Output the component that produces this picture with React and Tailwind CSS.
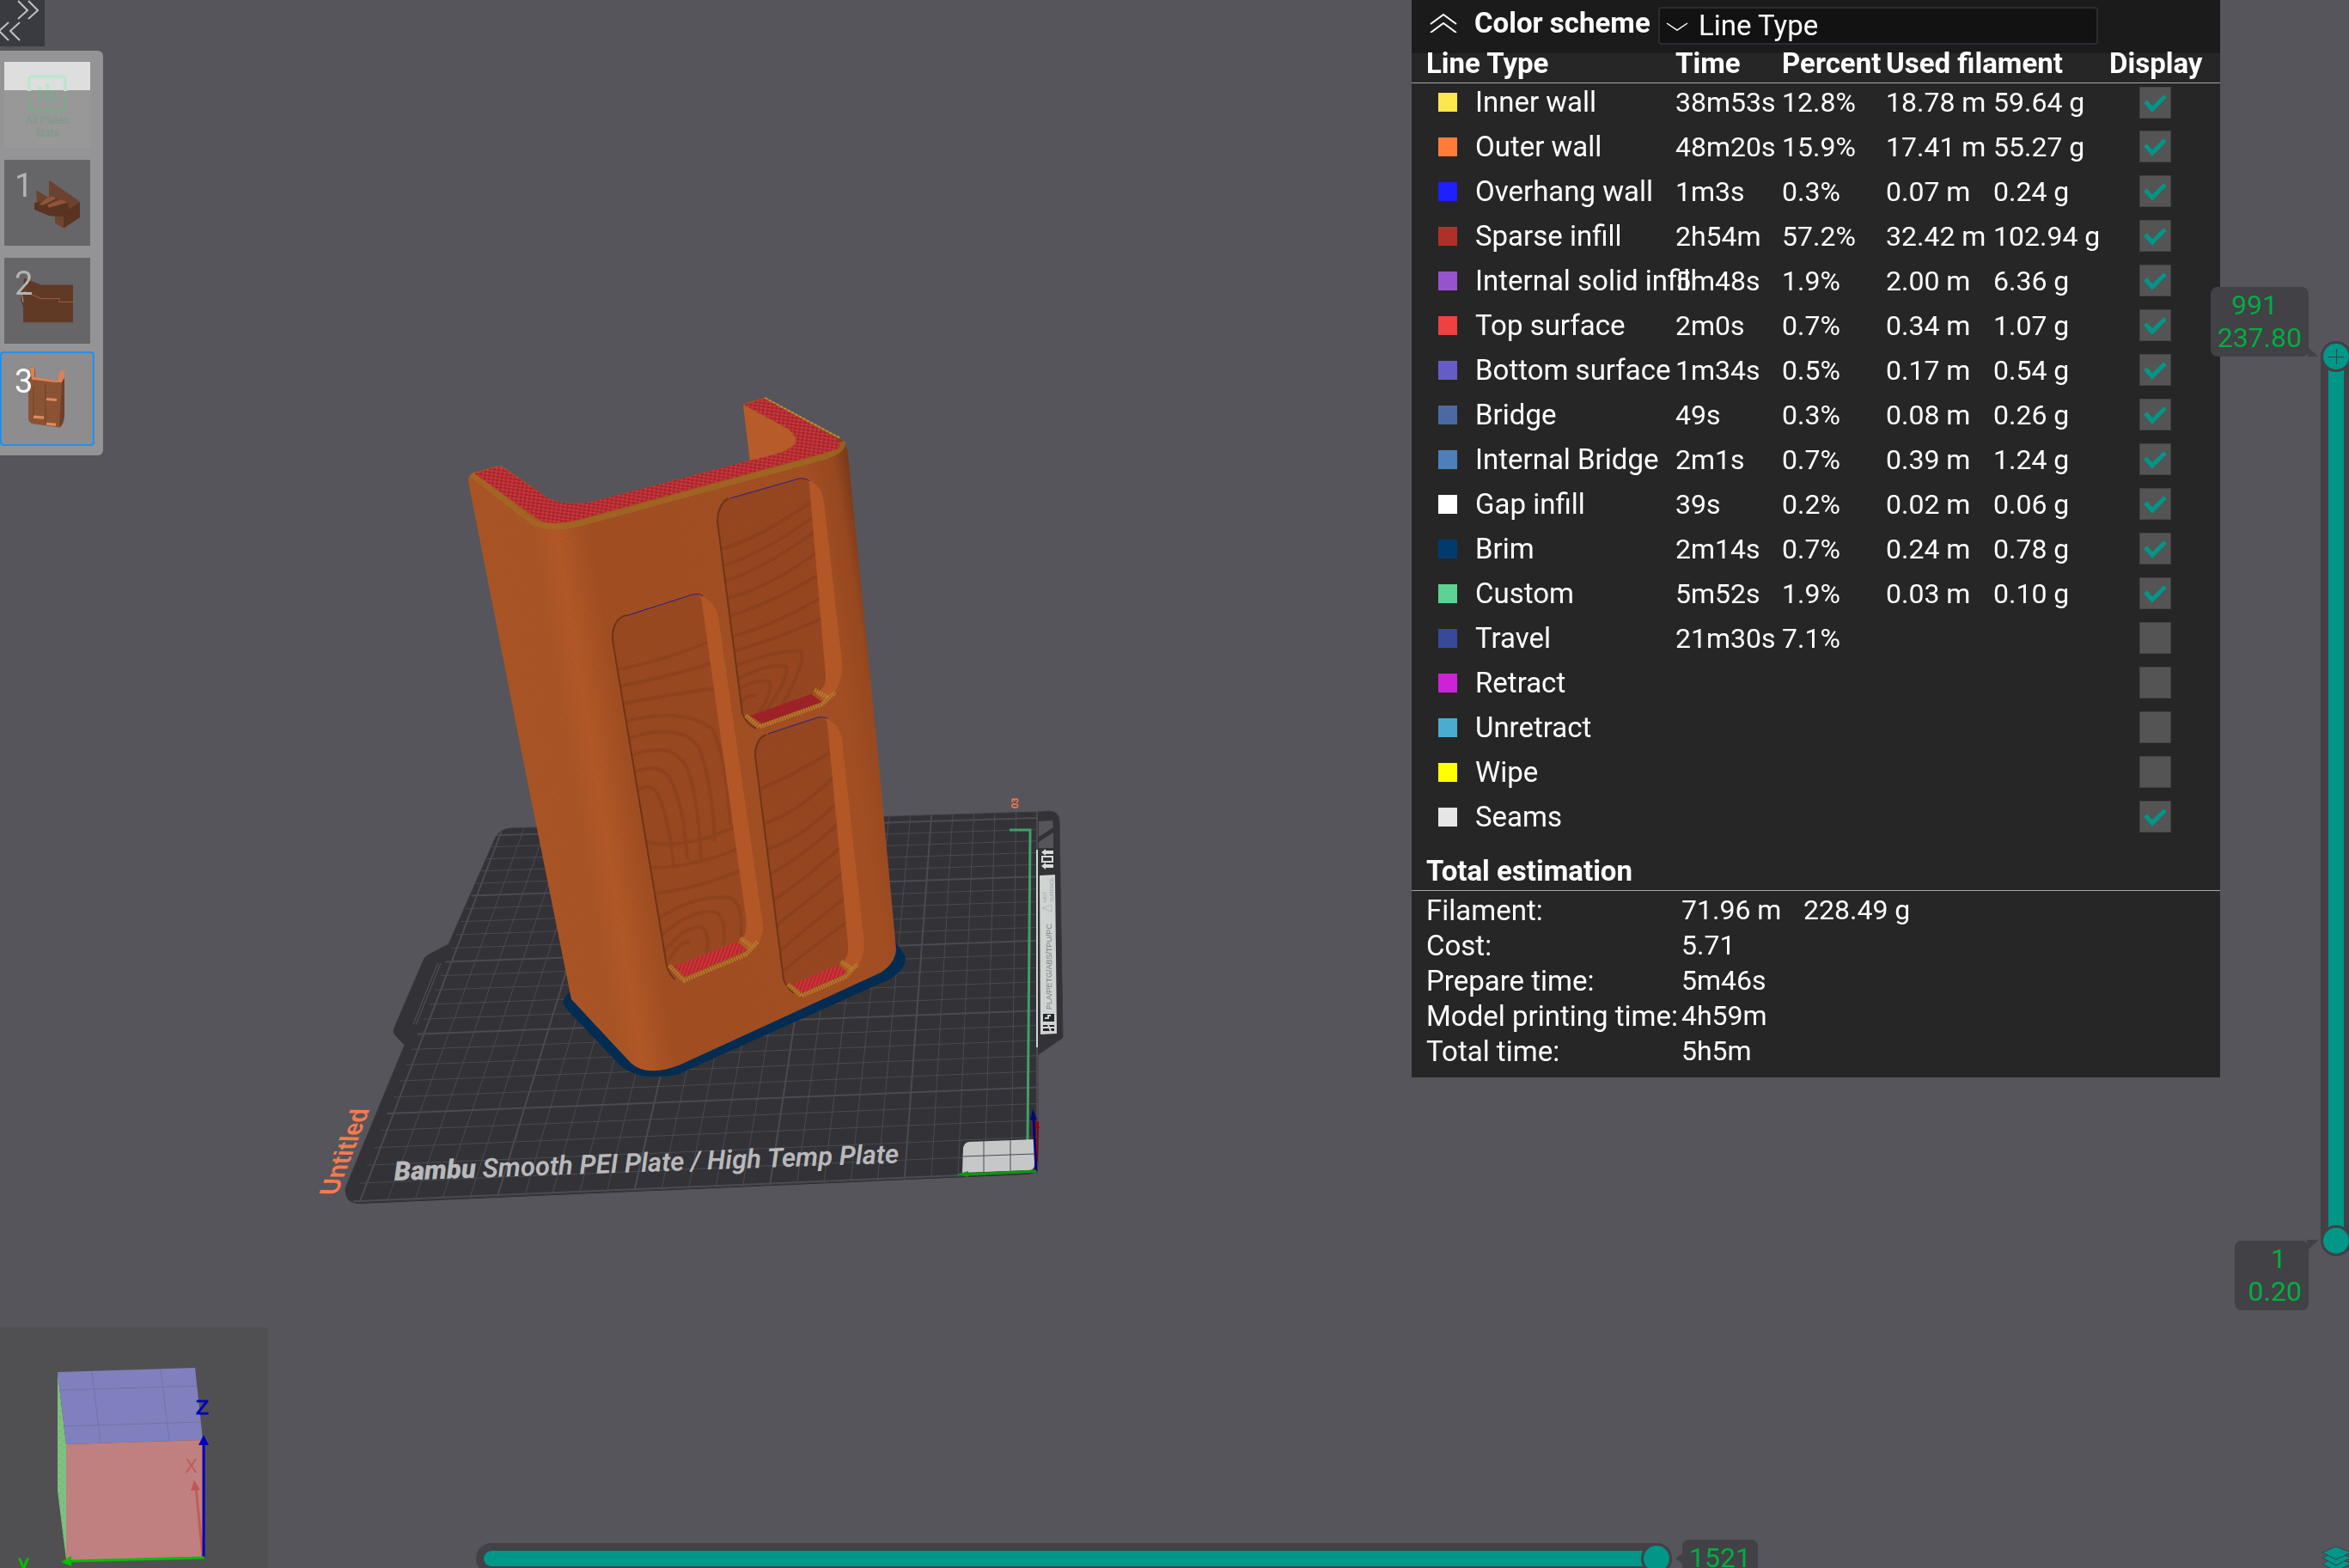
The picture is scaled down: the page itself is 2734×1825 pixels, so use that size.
import React, { useState } from "react";

const LINE_TYPES = [
  ["Inner wall", "#ffe64d", "38m53s", "12.8%", "18.78 m", "59.64 g", true],
  ["Outer wall", "#ff7d38", "48m20s", "15.9%", "17.41 m", "55.27 g", true],
  ["Overhang wall", "#1f1fff", "1m3s", "0.3%", "0.07 m", "0.24 g", true],
  ["Sparse infill", "#b03029", "2h54m", "57.2%", "32.42 m", "102.94 g", true],
  ["Internal solid infill", "#9654cc", "5m48s", "1.9%", "2.00 m", "6.36 g", true],
  ["Top surface", "#f04040", "2m0s", "0.7%", "0.34 m", "1.07 g", true],
  ["Bottom surface", "#665cc7", "1m34s", "0.5%", "0.17 m", "0.54 g", true],
  ["Bridge", "#4d69a3", "49s", "0.3%", "0.08 m", "0.26 g", true],
  ["Internal Bridge", "#4d80ba", "2m1s", "0.7%", "0.39 m", "1.24 g", true],
  ["Gap infill", "#ffffff", "39s", "0.2%", "0.02 m", "0.06 g", true],
  ["Brim", "#003b6e", "2m14s", "0.7%", "0.24 m", "0.78 g", true],
  ["Custom", "#5ed194", "5m52s", "1.9%", "0.03 m", "0.10 g", true],
  ["Travel", "#38489b", "21m30s", "7.1%", "", "", false],
  ["Retract", "#cd22d6", "", "", "", "", false],
  ["Unretract", "#49adcf", "", "", "", "", false],
  ["Wipe", "#ffff00", "", "", "", "", false],
  ["Seams", "#e6e6e6", "", "", "", "", true],
];

const TOTALS = [
  ["Filament:", "71.96 m", "228.49 g"],
  ["Cost:", "5.71", ""],
  ["Prepare time:", "5m46s", ""],
  ["Model printing time:", "4h59m", ""],
  ["Total time:", "5h5m", ""],
];

/* Projects plate coordinates (0..1, 0..1) onto the perspective quad. */
const QUAD = [[419, 1398], [1208, 1364], [1207, 952], [582, 972]];
function project(u, v) {
  const [[x0, y0], [x1, y1], [x2, y2], [x3, y3]] = QUAD;
  const dx1 = x1 - x2, dx2 = x3 - x2, sx = x0 - x1 + x2 - x3;
  const dy1 = y1 - y2, dy2 = y3 - y2, sy = y0 - y1 + y2 - y3;
  const den = dx1 * dy2 - dx2 * dy1;
  const g = (sx * dy2 - dx2 * sy) / den;
  const h = (dx1 * sy - sx * dy1) / den;
  const w = g * u + h * v + 1;
  return [
    ((x1 - x0 + g * x1) * u + (x3 - x0 + h * x3) * v + x0) / w,
    ((y1 - y0 + g * y1) * u + (y3 - y0 + h * y3) * v + y0) / w,
  ];
}
function gridPath(major) {
  let d = "";
  for (let i = 0; i <= 25; i++) {
    if ((i % 5 === 0) !== major) continue;
    const t = i / 25;
    const seg = (a, b) => {
      d += `M${a[0].toFixed(1)} ${a[1].toFixed(1)}L${b[0].toFixed(1)} ${b[1].toFixed(1)}`;
    };
    seg(project(t, -0.015), project(t, 1.04));
    seg(project(-0.01, t), project(1, t));
  }
  return d;
}

const PLATE =
  "M594 964L1207 945L1220 944Q1233 944 1233 956L1237 1207L1208 1227L1208 1356Q1207 1365 1194 1366L419 1400Q401 1400 402 1383L471 1216L459 1203Q457 1200 459 1196L493 1117Q495 1113 499 1111L522 1099L577 974Q582 965 594 964Z";
const BODY =
  "M545 560Q545 552 551 550L580 542Q584 542 588 545L640 581Q660 589 690 584L873 536L865 471Q868 468 890 463L977 510Q986 516 987 530L1022 880L1043 1105Q1042 1121 1025 1132L790 1240Q752 1254 734 1237L665 1163L608 880Z";
const TOP =
  "M552 551L580 543L586 545L640 581Q660 589 690 584L873 536L898 530Q917 525 924 518Q931 510 917 499L866 471L890 464L973 510Q982 518 974 523L952 529L672 605Q640 613 626 604Z";
const POCKET_A = "M835 607Q836 586 848 580L932 557Q941 556 942 565L961 787Q962 803 946 808L873 833Q865 833 864 824Z";
const POCKET_B = "M713 745Q712 722 728 716L806 692Q816 690 817 702L868 1067Q871 1092 858 1097L785 1126Q777 1126 775 1116Z";
const POCKET_C = "M879 880Q879 860 892 855L952 835Q962 834 963 843L987 1100Q988 1118 976 1123L922 1146Q914 1146 912 1138Z";

function Scene() {
  return (
    <svg className="block h-auto w-[950px] shrink-0" viewBox="340 440 950 980" role="img" aria-label="Sliced model on build plate">
      <defs>
        <linearGradient id="bodyShade" gradientUnits="userSpaceOnUse" x1="610" y1="930" x2="1040" y2="860">
          <stop offset="0" stopColor="#af5727" />
          <stop offset="0.14" stopColor="#ae5727" />
          <stop offset="0.2" stopColor="#b85b28" />
          <stop offset="0.29" stopColor="#a55023" />
          <stop offset="0.88" stopColor="#a75124" />
          <stop offset="0.96" stopColor="#9c4b21" />
          <stop offset="1" stopColor="#7c3b1a" />
        </linearGradient>
        <pattern id="layers" width="3" height="3" patternUnits="userSpaceOnUse" patternTransform="rotate(-18)">
          <path d="M0 1H3" stroke="#6b3012" strokeWidth="1" opacity="0.28" />
        </pattern>
        <pattern id="topLines" width="5" height="4" patternUnits="userSpaceOnUse" patternTransform="rotate(8)">
          <rect width="5" height="4" fill="#be2d32" />
          <path d="M0 1H3" stroke="#7d1d23" />
          <path d="M2 3H4" stroke="#cc5252" />
        </pattern>
        <pattern id="redLines" width="4" height="4" patternUnits="userSpaceOnUse" patternTransform="rotate(20)">
          <rect width="4" height="4" fill="#d23238" />
          <path d="M1 0V4" stroke="#8a2024" />
        </pattern>
        <clipPath id="clipA"><path d={POCKET_A} /></clipPath>
        <clipPath id="clipB"><path d={POCKET_B} /></clipPath>
        <clipPath id="clipC"><path d={POCKET_C} /></clipPath>
        <clipPath id="clipPlate"><path d="M594 964L1207 945L1208 1366L401 1400L402 1383L579 970Z" /></clipPath>
      </defs>

      <path d={PLATE} fill="#26262a" transform="translate(0 1)" />
      <path d={PLATE} fill="#333237" stroke="#3a393f" />
      <path d="M510 1120L481 1192M513 1121L484 1193" stroke="#56555b" strokeWidth="1" />
      <g clipPath="url(#clipPlate)" fill="none" stroke="#4a4a53">
        <path d={gridPath(false)} strokeWidth="1" />
        <path d={gridPath(true)} strokeWidth="2" />
      </g>
      <path d="M1207 945V1364" stroke="#4a4a53" strokeWidth="2" />
      <path d="M1209 956L1225 955L1226 963L1209 974ZM1209 980L1226 969V987H1209Z" fill="#56555b" />
      <path d="M1207 989V1219" stroke="#d0d4d4" strokeWidth="2" />
      <path d="M1175 966H1199L1196 1327" fill="none" stroke="#3fa069" strokeWidth="3" />
      <path d="M1210 1019L1228 1018L1230 1203L1211 1204Z" fill="#cfd4d3" />
      <g fill="#d6dada">
        <path d="M1212 992L1217 988V990H1226V994H1217V996ZM1212 1008L1217 1004V1006H1226V1010H1217V1012Z" />
        <path d="M1213 997H1225V1003H1213Z" fill="none" stroke="#d6dada" strokeWidth="2" />
      </g>
      <text transform="translate(1224 1175) rotate(-90)" fontFamily="Liberation Sans" fontSize="9" fill="#7c8080">PLA/PETG/ABS/TPU/PC</text>
      <text transform="translate(1218 1050) rotate(-90)" fontFamily="Liberation Sans" fontSize="6" fill="#9a9e9e">HOT</text>
      <text transform="translate(1226 1050) rotate(-90)" fontFamily="Liberation Sans" fontSize="6" fill="#9a9e9e">SURFACE</text>
      <path d="M1224 1053V1061L1213 1057Z" fill="none" stroke="#b3b8b8" />
      <path d="M1214 1180H1227V1189H1214ZM1214 1193H1227V1200H1214Z" fill="#26262a" />
      <path d="M1216 1185H1220V1182H1223M1214 1196H1227M1220 1193L1223 1200" fill="none" stroke="#cfd4d3" strokeWidth="2" />

      <path d="M1121 1336Q1122 1330 1128 1329L1204 1326V1357Q1203 1362 1198 1362L1120 1365Z" fill="#c6c8c8" />
      <path d="M1145 1328V1364M1176 1327V1363M1121 1346L1204 1343" stroke="#4a4a53" />
      <path d="M1207 1352L1208 1306" stroke="#8e0000" strokeWidth="2" />
      <path d="M1204 1314L1206 1303L1210 1313Z" fill="#a00000" />
      <path d="M1206 1363L1203 1300" stroke="#05057e" strokeWidth="3" />
      <path d="M1199 1304L1202 1291L1207 1303Z" fill="#05057e" />
      <path d="M1206 1363L1124 1367" stroke="#0a9a0a" strokeWidth="3" />
      <path d="M1113 1367L1127 1363V1370Z" fill="#0a9a0a" />

      <g fontFamily="Roboto" fontStyle="italic" fill="#b9b9bb">
        <text transform="translate(459 1374) rotate(-2)" fontSize="31">
          <tspan fontWeight="900">Bambu</tspan>
          <tspan fontWeight="600"> Smooth PEI Plate / High Temp Plate</tspan>
        </text>
      </g>
      <text transform="translate(392 1391) rotate(-69) skewX(20)" fontFamily="Liberation Sans" fontWeight="700" fontSize="29" fill="#f87a4d">Untitled</text>
      <text transform="translate(1185 941) rotate(-90)" fontFamily="Roboto" fontWeight="700" fontSize="11" fill="#f87a4d">03</text>

      <path d="M661 1156L655 1166Q657 1172 662 1177L722 1240Q745 1260 790 1250L1037 1139Q1057 1125 1053 1112L1043 1097Z" fill="#022c51" />

      <path d="M865 471L935 500L925 530L873 537Z" fill="#b45b28" />
      <path d={BODY} fill="url(#bodyShade)" />
      <path d={BODY} fill="url(#layers)" />
      <path d="M865 471L917 499Q931 510 924 518Q917 525 898 530L873 537Z" fill="#b55c28" />
      <path d="M549 552L622 609Q645 617 675 609L955 533Q984 524 980 514" fill="none" stroke="#a06c22" strokeWidth="7" opacity="0.7" />
      <path d="M890 463L978 510" fill="none" stroke="#c08a35" strokeWidth="2" strokeDasharray="4 1" />
      <path d={TOP} fill="url(#topLines)" />

      <g fill="#b35726">
        <path d="M936 557Q956 562 959 584L979 762Q984 800 960 816L946 806L955 780Z" />
        <path d="M812 692Q832 698 836 718L887 1070Q892 1096 872 1107L858 1096L862 1060Z" />
        <path d="M958 835Q977 842 980 860L1006 1098Q1006 1122 988 1132L976 1122L978 1090Z" />
      </g>
      <path d={POCKET_A} fill="#9a4922" />
      <path d={POCKET_B} fill="#9d4b22" />
      <path d={POCKET_C} fill="#9a4922" />
      <g fill="none" stroke="#7a3919" strokeWidth="4" opacity="0.32">
        <g clipPath="url(#clipA)">
          <path d="M830 680Q880 670 960 610M830 700Q890 690 960 636M830 722Q890 708 965 662M840 744Q900 730 965 690M840 762Q900 746 965 716M845 780Q900 756 932 758Q940 770 905 830M850 795Q895 770 915 776Q920 786 890 830M850 808Q880 788 896 794Q900 806 880 835M860 822Q870 806 880 810" />
          <path d="M835 640Q880 630 950 580M835 660Q880 650 955 596" />
        </g>
        <g clipPath="url(#clipB)">
          <path d="M715 780Q770 770 830 745M715 800Q770 790 835 770M720 820Q780 808 840 800M725 840Q800 822 830 850Q845 880 850 960M728 860Q790 840 812 868Q828 900 832 980M732 880Q780 862 798 890Q812 920 816 1000M736 900Q768 884 782 910Q796 940 800 1000M742 920Q760 908 768 930Q780 960 784 1010" />
          <path d="M750 980Q800 990 860 960M755 1010Q810 1010 865 985M760 1040Q810 1035 865 1012M765 1070Q810 1040 850 1045Q866 1052 862 1090M768 1090Q806 1056 834 1062Q846 1070 842 1100M772 1108Q800 1074 818 1080Q826 1088 822 1110M778 1118Q794 1092 804 1098" />
        </g>
        <g clipPath="url(#clipC)">
          <path d="M880 920Q920 905 975 870M884 960Q925 950 975 900M888 990Q930 980 978 930M892 1020Q930 1000 980 955M896 1050Q930 1030 985 980M900 1080Q930 1056 988 1010M905 1110Q930 1086 990 1040M912 1130Q940 1106 990 1070" />
        </g>
      </g>
      <path d={POCKET_A} fill="url(#layers)" />
      <path d={POCKET_B} fill="url(#layers)" />
      <path d={POCKET_C} fill="url(#layers)" />
      <g fill="none" stroke="#6f3517" strokeWidth="2">
        <path d="M848 580Q836 586 835 607L864 830Q868 842 880 848" />
        <path d="M728 716Q712 722 713 745L776 1124Q780 1136 786 1140" />
        <path d="M892 855Q879 860 879 880L912 1140Q916 1150 924 1156" />
      </g>
      <g fill="none" stroke="#2a1d8c" strokeWidth="1">
        <path d="M850 580L930 557Q938 556 942 560" />
        <path d="M728 717L806 692Q814 690 818 694" />
        <path d="M894 854L952 835Q958 834 963 836" />
      </g>
      <g fill="none" stroke="#b5822c" strokeWidth="5" strokeDasharray="2 1" opacity="0.85">
        <path d="M868 833L884 846L956 820L972 806M948 803L964 812" />
        <path d="M779 1124L796 1141L868 1111L882 1096M862 1092L876 1102" />
        <path d="M917 1146L933 1159L984 1137L998 1122M979 1119L992 1128" />
      </g>
      <path d="M873 833L944 808L957 817L887 842Z" fill="#9c2228" />
      <path d="M785 1125L858 1096L869 1106L797 1137ZM922 1146L976 1123L985 1133L934 1155Z" fill="url(#redLines)" />
    </svg>
  );
}

function PlateRail() {
  const item = "relative block h-[100px] w-[100px] shrink-0 bg-[#666668]";
  const num = "absolute left-[12px] top-[8px] text-[38px] leading-[44px]";
  return (
    <nav className="w-[120px] shrink-0" aria-label="Plates">
      <button className="block h-[54px] w-[52px] bg-[#393b41]" aria-label="Collapse plates">
        <svg viewBox="0 0 52 54" className="h-[54px] w-[52px]" fill="none" stroke="#bfc0c1" strokeWidth="2">
          <path d="M21 1L32 12L21 22M33 1L44 12L33 22M10 26L-1 36L10 47M23 26L12 36L23 47" />
        </svg>
      </button>
      <div className="mt-[5px] flex h-[471px] flex-col gap-[14px] rounded-r-[6px] bg-[#949496] pl-[5px] pt-[13px]">
        <button className="flex h-[100px] w-[100px] shrink-0 flex-col items-center bg-linear-to-b from-[#dedede] from-33% to-[#989898] to-33% pt-[14px] text-[12px] leading-[15px] text-[#7b9b88]">
          <svg viewBox="0 0 46 46" className="h-[46px] w-[46px] shrink-0" fill="none" strokeWidth="4">
            <path d="M2 20V7Q2 3 6 3H40Q44 3 44 7V20" stroke="#bfe5cd" />
            <path d="M2 27V40Q2 43 6 43H40Q44 43 44 40V27" stroke="#82a58f" />
            <path d="M14 15V19M23 11V19" stroke="#bfe5cd" />
            <path d="M14 19V33M23 19V33M32 21V33" stroke="#82a58f" />
          </svg>
          <span className="mt-[1px]">All Plates<br />Stats</span>
        </button>
        <button className={item}>
          <svg viewBox="0 0 100 97" preserveAspectRatio="none" className="h-[100px] w-[100px]">
            <path d="M52 23L88 47L88 65L69 77L59 71V64L52 63L35 56V49L38 47L37 34L50 42L52 42Z" fill="#6b432e" />
            <path d="M35 49L64 43L50 51L74 47L75 56L88 48V65L69 77L69 64L52 63L35 56Z" fill="#5a3422" />
            <path d="M40 51L50 43L56 41L60 44L46 51ZM50 51L66 45L74 48L52 54Z" fill="#8f5536" />
            <path d="M59 64L69 66V77L59 71Z" fill="#70452e" />
          </svg>
          <span className={num + " text-[#b4b4b5]"}>1</span>
        </button>
        <button className={item}>
          <svg viewBox="0 0 100 97" preserveAspectRatio="none" className="h-[100px] w-[100px]">
            <path d="M23 23L43 30.500H80V73H22V56L19 47V39L22 36Z" fill="#613a26" />
            <path d="M23 38L43 46H64V50H80" fill="none" stroke="#9a5c3a" />
            <path d="M20 40L22 50" stroke="#a9a9aa" />
          </svg>
          <span className={num + " text-[#b4b4b5]"}>2</span>
        </button>
        <button className="relative -ml-[5px] -mt-[5px] block h-[110px] w-[110px] shrink-0 rounded-[4px] border-2 border-[#1f90f2] bg-[#8d8d8f]">
          <svg viewBox="0 0 106 103" preserveAspectRatio="none" className="h-[106px] w-[106px]">
            <path d="M34 16L38 15L40 28L67 31L69 20L73 19L73 70Q72 82 67 84L36 80Q31 78 31 74V29Z" fill="#8a5434" />
            <path d="M33 17L38 15L38 27L65 31L68 20L73 19V28L70 33H62L35 30Z" fill="#dc8353" />
            <path d="M40 15L39 27L65 30L67 20V15Z" fill="#8d8d8f" />
            <path d="M70 33L73 28V70Q72 82 67 84Z" fill="#6e4029" />
            <path d="M37 38V72M51 34V80" stroke="#6c412b" />
            <path d="M52 52L64 53M37 72L49 73M52 80L63 81" stroke="#e08b5b" strokeWidth="3" />
          </svg>
          <span className="absolute left-[15px] top-[11px] text-[38px] leading-[44px] text-white">3</span>
        </button>
      </div>
    </nav>
  );
}

function CheckBox({ checked, onChange, label }) {
  return (
    <span className="relative block h-[37px] w-[37px]">
      <input type="checkbox" checked={checked} onChange={onChange} aria-label={label} className="block h-[37px] w-[37px] appearance-none border border-[#444444] bg-[#545454]" />
      {checked && (
        <svg viewBox="0 0 37 37" className="pointer-events-none absolute inset-0" fill="none" stroke="#009688" strokeWidth="5">
          <path d="M7 17L15 26L30 11" />
        </svg>
      )}
    </span>
  );
}

function Legend() {
  const [shown, setShown] = useState(LINE_TYPES.map((r) => r[6]));
  const cell = "p-0 pt-[4px] align-top font-normal";
  const box = "flex h-[37px] items-center";
  return (
    <section className="ml-auto w-[941px] shrink-0 self-start bg-[#262626] text-[32px] leading-[38px] text-white">
      <header className="flex h-[62px] items-start bg-[#1b1b1b] pl-[21px] pt-[8px] text-[33px]">
        <button className="mt-[8px] h-[22px] w-[32px]" aria-label="Collapse legend">
          <svg viewBox="0 0 32 22" className="h-[22px] w-[32px]" fill="none" stroke="#ffffff" strokeWidth="2">
            <path d="M1 12L16 1L31 12M1 22L16 11L31 22" />
          </svg>
        </button>
        <label htmlFor="scheme" className="ml-[20px] w-[214px] whitespace-nowrap font-bold">Color scheme</label>
        <div className="relative">
          <select id="scheme" className="h-[44px] w-[512px] appearance-none rounded-[4px] border-2 border-[#2c2b31] bg-[#121212] pl-[45px] leading-[38px]">
            <option>Line Type</option>
          </select>
          <svg viewBox="0 0 26 10" className="pointer-events-none absolute left-[9px] top-[18px] h-[10px] w-[26px]" fill="none" stroke="#ffffff" strokeWidth="1.500">
            <path d="M1 1L13 9L25 1" />
          </svg>
        </div>
      </header>
      <table className="w-full table-fixed border-collapse whitespace-nowrap text-left">
        <colgroup>
          <col className="w-[307px]" />
          <col className="w-[124px]" />
          <col className="w-[121px]" />
          <col className="w-[125px]" />
          <col className="w-[135px]" />
          <col />
        </colgroup>
        <thead>
          <tr className="h-[34px] border-b border-[#a8a8a8] text-[33px] leading-[24px]">
            <th className="p-0 pl-[17px] align-top">Line Type</th>
            <th className="p-0 align-top">Time</th>
            <th className="p-0 align-top">Percent</th>
            <th className="p-0 align-top" colSpan={2}>Used filament</th>
            <th className="p-0 align-top">Display</th>
          </tr>
        </thead>
        <tbody>
          {LINE_TYPES.map(([name, color, time, pct, len, weight], i) => (
            <tr key={name} className="h-[52px]">
              <th scope="row" className={cell + " pl-[31px] text-[33px]"}>
                <span className={box}>
                  <span className="mr-[21px] h-[22px] w-[22px] shrink-0" style={{ backgroundColor: color }} />
                  {name}
                </span>
              </th>
              <td className={cell}><span className={box}>{time}</span></td>
              <td className={cell}><span className={box}>{pct}</span></td>
              <td className={cell}><span className={box}>{len}</span></td>
              <td className={cell}><span className={box}>{weight}</span></td>
              <td className={cell + " pl-[35px]"}>
                <CheckBox checked={shown[i]} label={"Display " + name} onChange={() => setShown(shown.map((s, j) => (j === i ? !s : s)))} />
              </td>
            </tr>
          ))}
        </tbody>
      </table>
      <h2 className="h-[57px] border-b border-[#a8a8a8] pl-[17px] pt-[15px] text-[33px] font-bold">Total estimation</h2>
      <dl className="pb-[10px] pl-[17px] pt-[2px] leading-[41px]">
        {TOTALS.map(([label, a, b]) => (
          <div key={label} className="flex whitespace-nowrap">
            <dt className="w-[297px] text-[33px]">{label}</dt>
            <dd className="w-[142px]">{a}</dd>
            <dd>{b}</dd>
          </div>
        ))}
      </dl>
    </section>
  );
}

function ViewCube() {
  return (
    <svg viewBox="0 1545 312 280" className="h-[280px] w-[312px] shrink-0 bg-[#505052]" role="img" aria-label="View orientation">
      <path d="M67 1598L77 1681V1815L67 1735Z" fill="#80bf80" />
      <path d="M70 1625V1755M74 1660V1790" stroke="#6fa870" strokeDasharray="2 6" />
      <path d="M67 1597L227 1592L236 1676L77 1681Z" fill="#8080bf" />
      <path d="M107 1597L117 1679M187 1594L197 1677M70 1618L229 1613M74 1660L234 1655" stroke="#7272ab" />
      <path d="M77 1681L236 1676V1812L77 1817Z" fill="#bf807f" />
      <path d="M236 1812L228 1731" stroke="#c25b5b" strokeWidth="3" />
      <path d="M222 1735L226 1723L233 1734Z" fill="#c25555" />
      <path d="M237 1813V1680" stroke="#0000bf" strokeWidth="3" />
      <path d="M231 1682L237 1670L243 1682Z" fill="#0000bf" />
      <path d="M238 1813L82 1817" stroke="#00bf00" strokeWidth="3" />
      <path d="M71 1818L83 1811V1823Z" fill="#00bf00" />
      <g fontFamily="DejaVu Sans" fontSize="22">
        <text x="228" y="1646" fill="#0000bf" stroke="#0000bf">Z</text>
        <text x="215" y="1714" fill="#c25b5b">X</text>
        <text x="21" y="1826" fill="#00bf00" stroke="#00bf00">y</text>
      </g>
    </svg>
  );
}

function MoveSlider() {
  return (
    <div className="ml-[242px] mr-[538px] flex h-[33px] flex-1 items-start overflow-hidden">
      <div className="relative mt-[4px] h-[36px] flex-1 rounded-full bg-[#424146]">
        <div className="absolute left-[9px] right-[34px] top-[9px] h-[18px] rounded-l-full bg-[#009688]" />
        <div className="absolute right-0 top-0 h-[36px] w-[36px] rounded-full border-[3px] border-[#424146] bg-[#009688]" />
        <input type="range" min="0" max="1521" defaultValue="1521" aria-label="Move" className="absolute inset-0 w-full opacity-0" />
      </div>
      <svg viewBox="0 0 12 33" className="h-[33px] w-[12px] shrink-0"><path d="M4 22L12 16V28Z" fill="#424146" /></svg>
      <output className="block h-[50px] w-[88px] rounded-[8px] bg-[#424146] text-center text-[32px] leading-[42px] text-[#00ae42]">1521</output>
    </div>
  );
}

function LayerSlider() {
  const tip = "absolute right-[47px] block rounded-[8px] bg-[#424146] pt-[2px] pr-[8px] text-right text-[32px] leading-[38px] text-[#00ae42]";
  const knob = "absolute left-0 h-[36px] w-[36px] rounded-full border-[3px] border-[#424146] bg-[#009688]";
  return (
    <aside className="relative flex w-[150px] shrink-0 flex-col items-end">
      <div className="relative mt-[397px] h-[1065px] w-[33px]">
        <div className="absolute left-0 top-0 h-[1065px] w-[36px] rounded-full bg-[#424146]" />
        <div className="absolute bottom-[30px] left-[9px] top-[34px] w-[18px] bg-[#009688]" />
        <button className={knob + " top-0"} aria-label="Add at top layer">
          <svg viewBox="0 0 30 30" className="h-[30px] w-[30px]" stroke="#424146" strokeWidth="1"><path d="M6 15.500H24M15.500 6V24" /></svg>
        </button>
        <button className={knob + " bottom-0"} aria-label="Lower layer" />
      </div>
      <output className={tip + " top-[334px] h-[81px] w-[114px]"}>
        <span className="block pr-[28px]">991</span>
        <span className="block">237.80</span>
      </output>
      <svg viewBox="0 0 12 12" className="absolute right-[36px] top-[404px] h-[12px] w-[12px]"><path d="M0 0L12 11H0Z" fill="#424146" /></svg>
      <output className={tip + " top-[1444px] h-[81px] w-[86px]"}>
        <span className="block pr-[18px]">1</span>
        <span className="block">0.20</span>
      </output>
      <svg viewBox="0 0 14 12" className="absolute right-[35px] top-[1443px] h-[12px] w-[14px]"><path d="M0 0H14L2 11Z" fill="#424146" /></svg>
      <button className="mt-auto h-[26px] w-[32px]" aria-label="Layers">
        <svg viewBox="0 0 32 26" className="h-[26px] w-[32px]" fill="#009688" stroke="#424146" strokeWidth="1">
          <path d="M17 13L34 21L17 30L1 21Z" />
          <path d="M17 7L34 14L17 23L1 14Z" />
          <path d="M17 1L34 8L17 16L1 8Z" />
        </svg>
      </button>
    </aside>
  );
}

export default function App() {
  return (
    <main className="flex h-screen w-full overflow-hidden bg-[#56555b] font-['Roboto',sans-serif]">
      <div className="flex min-w-0 flex-1 flex-col justify-between">
        <div className="flex">
          <PlateRail />
          <div className="ml-[220px] mt-[440px] h-[980px]"><Scene /></div>
          <Legend />
        </div>
        <div className="flex h-[280px] items-end">
          <ViewCube />
          <MoveSlider />
        </div>
      </div>
      <LayerSlider />
    </main>
  );
}
